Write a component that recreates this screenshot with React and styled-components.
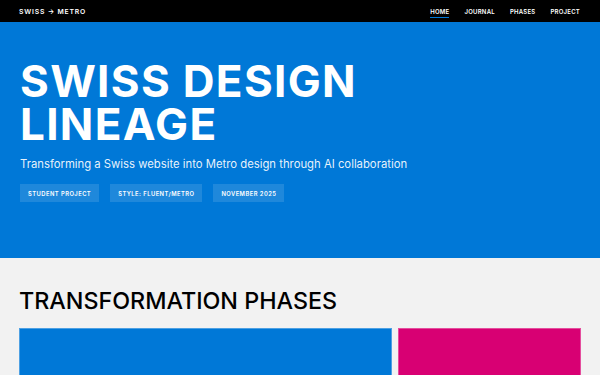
import styled, { createGlobalStyle } from 'styled-components';

const GlobalStyle = createGlobalStyle`
    * {
        box-sizing: border-box;
    }
    body {
        margin: 0;
        font-family: Inter, "Liberation Sans", sans-serif;
        background-color: #F2F2F2;
    }
`;

const links = ['HOME', 'JOURNAL', 'PHASES', 'PROJECT'];
const tags = ['STUDENT PROJECT', 'STYLE: FLUENT/METRO', 'NOVEMBER 2025'];

export default function App() {
    return (
        <>
            <GlobalStyle />
            <NavBar>
                <Logo>SWISS → METRO</Logo>
                <NavLinks>
                    {links.map((link, i) => (
                        <NavLink key={link} active={i === 0}>{link}</NavLink>
                    ))}
                </NavLinks>
            </NavBar>
            <Hero>
                <HeroTitle>SWISS DESIGN<br />LINEAGE</HeroTitle>
                <HeroSubtitle>
                    Transforming a Swiss website into Metro design through AI collaboration
                </HeroSubtitle>
                <TagRow>
                    {tags.map((tag) => (
                        <Tag key={tag}>{tag}</Tag>
                    ))}
                </TagRow>
            </Hero>
            <Section>
                <SectionTitle>TRANSFORMATION PHASES</SectionTitle>
                <PhaseGrid>
                    <PhaseCard color="#0078D7" span={2} />
                    <PhaseCard color="#D80073" />
                </PhaseGrid>
            </Section>
        </>
    );
}

const NavBar = styled.nav`
    height: 22px;
    background-color: #000000;
    display: flex;
    align-items: center;
    justify-content: space-between;
    padding: 0 20px 0 19px;
`;

const Logo = styled.span`
    color: #FFFFFF;
    font-size: 6.8px;
    font-weight: 600;
    letter-spacing: 0.12em;
`;

const NavLinks = styled.div`
    display: flex;
    gap: 15px;
    height: 100%;
`;

const NavLink = styled.a`
    color: #FFFFFF;
    font-size: 6px;
    font-weight: 600;
    letter-spacing: 0.04em;
    display: flex;
    align-items: center;
    position: relative;
    &::after {
        content: '';
        display: ${props => props.active ? 'block' : 'none'};
        position: absolute;
        left: 0;
        right: 0;
        bottom: 4px;
        height: 1px;
        background-color: #0078D7;
    }
`;

const Hero = styled.header`
    background-color: #0078D7;
    color: #FFFFFF;
    padding: 38px 20px 56px;
`;

const HeroTitle = styled.h1`
    margin: 0;
    font-size: 44px;
    font-weight: 700;
    line-height: 43px;
    letter-spacing: 0.03em;
`;

const HeroSubtitle = styled.p`
    margin: 11px 0 0;
    font-size: 11.3px;
    color: rgba(255, 255, 255, 0.92);
`;

const TagRow = styled.div`
    display: flex;
    gap: 11px;
    margin-top: 13px;
`;

const Tag = styled.span`
    height: 18px;
    padding: 0 8px;
    display: flex;
    align-items: center;
    background-color: rgba(255, 255, 255, 0.12);
    font-size: 5.8px;
    font-weight: 600;
    letter-spacing: 0.08em;
`;

const Section = styled.section`
    padding: 28px 19px 40px;
`;

const SectionTitle = styled.h2`
    margin: 0;
    font-size: 23.3px;
    font-weight: 500;
    color: #000000;
`;

const PhaseGrid = styled.div`
    display: grid;
    grid-template-columns: repeat(3, 1fr);
    gap: 6px;
    margin-top: 13px;
`;

const PhaseCard = styled.div`
    grid-column: span ${props => props.span || 1};
    height: 160px;
    background-color: ${props => props.color};
    border: 1px solid rgba(255, 255, 255, 0.3);
`;
